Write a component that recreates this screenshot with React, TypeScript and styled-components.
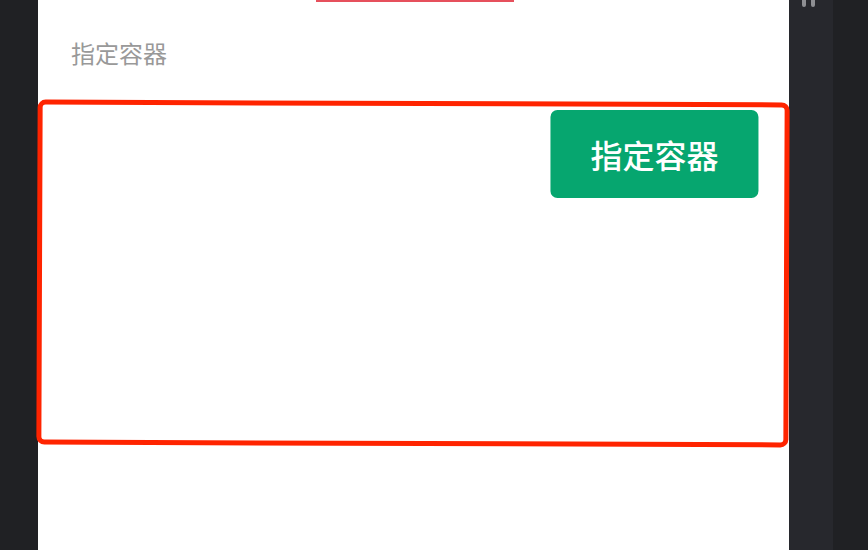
import styled, { createGlobalStyle } from "styled-components";

const GlobalStyle = createGlobalStyle`
	html, body {
		margin: 0;
		padding: 0;
		height: 100%;
		background: #202124;
		overflow: hidden;
	}
	#root {
		height: 100%;
	}
`;

const Page = styled.div`
	display: flex;
	height: 550px;
	font-family: "Noto Sans CJK SC", "Noto Sans", sans-serif;
`;

const Gutter = styled.div<{ $width: number }>`
	flex: 0 0 ${(props) => props.$width}px;
	background: #202124;
`;

const Panel = styled.main`
	flex: 0 0 750px;
	background: #ffffff;
	display: flex;
	flex-direction: column;
`;

const PrevEdge = styled.div`
	align-self: center;
	width: 198px;
	height: 2px;
	margin-left: 2px;
	background: #e6505c;
`;

const Label = styled.div`
	margin: 38px 0 0 33px;
	font-size: 24px;
	line-height: 26px;
	color: #999999;
`;

const Frame = styled.section`
	margin: 35px 0 0 -1px;
	width: 752px;
	height: 345px;
	box-sizing: border-box;
	border: 5px solid #ff2400;
	border-radius: 8px;
	transform: rotate(0.22deg);
	display: flex;
	justify-content: flex-end;
	align-items: flex-start;
	padding: 3px 26px 0 0;
`;

const TargetButton = styled.button`
	width: 208px;
	height: 88px;
	border: none;
	border-radius: 7px;
	background: #06a66f;
	color: #ffffff;
	font-family: inherit;
	font-size: 32px;
	font-weight: 500;
	cursor: pointer;
	transform: rotate(-0.22deg);
`;

const Sidebar = styled.aside`
	flex: 0 0 44px;
	background: #27282d;
	display: flex;
	justify-content: center;
`;

const Handle = styled.div`
	display: flex;
	gap: 5px;
	margin-left: -6px;
	span {
		width: 4px;
		height: 7px;
		background: #8e8f93;
		border-radius: 0 0 2px 2px;
	}
`;

function App() {
	return (
		<>
			<GlobalStyle />
			<Page>
				<Gutter $width={38} />
				<Panel>
					<PrevEdge />
					<Label>指定容器</Label>
					<Frame>
						<TargetButton>指定容器</TargetButton>
					</Frame>
				</Panel>
				<Sidebar>
					<Handle>
						<span />
						<span />
					</Handle>
				</Sidebar>
				<Gutter $width={36} />
			</Page>
		</>
	);
}

export default App;
